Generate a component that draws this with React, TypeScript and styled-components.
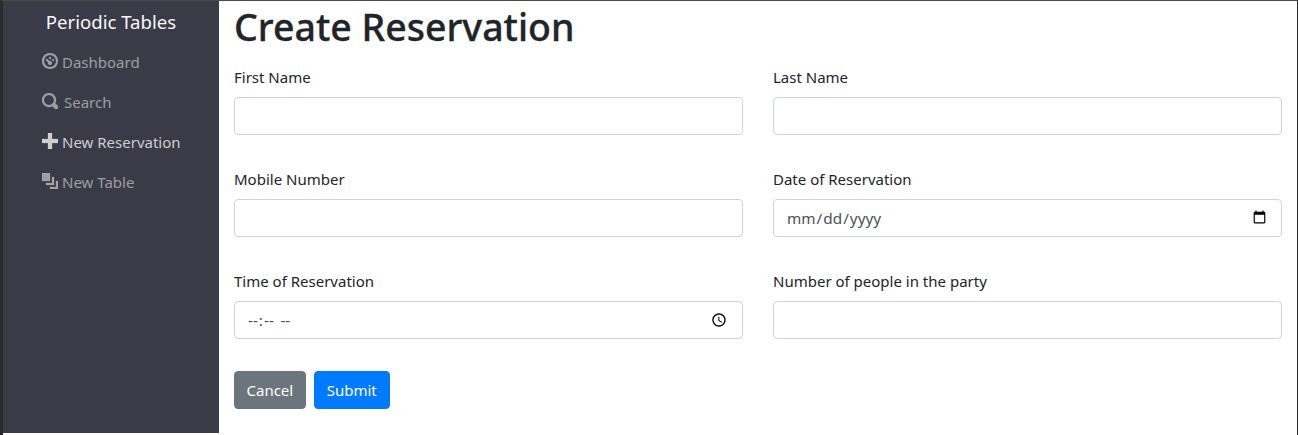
import React from "react";
import styled, { createGlobalStyle } from "styled-components";

const FONT = `"Noto Sans", "Open Sans", "Liberation Sans", sans-serif`;

const Global = createGlobalStyle`
  html, body { margin: 0; padding: 0; background: #fff; }
  * { box-sizing: border-box; }
  body { font-family: ${FONT}; font-size: 16px; line-height: 24px; color: #212529; }
`;

const Frame = styled.div`
  height: 435px;
  display: flex;
  border-top: 1px solid #4a4a4a;
  border-left: 3px solid #2b2b2b;
  border-right: 1px solid #2b2b2b;
  padding-bottom: 2px;
  background: #fff;
  overflow: hidden;
`;

const Sidebar = styled.aside`
  flex: 0 0 216px;
  background: #3a3b46;
  display: flex;
  flex-direction: column;
`;

const Brand = styled.div`
  height: 41px;
  padding-top: 7px;
  text-align: center;
  color: #f8f9fa;
  font-size: 18.6px;
  line-height: 27px;
`;

const Nav = styled.nav`
  display: flex;
  flex-direction: column;
`;

const NavItem = styled.a<{ $active?: boolean }>`
  height: 40px;
  display: flex;
  align-items: center;
  padding-left: 39px;
  font-size: 15px;
  color: ${(p) => (p.$active ? "rgba(255,255,255,0.75)" : "rgba(255,255,255,0.5)")};
  text-decoration: none;
`;

const NavIcon = styled.svg<{ $gap: number }>`
  width: 16px;
  height: 16px;
  fill: currentColor;
  stroke: currentColor;
  stroke-width: 0.12;
  margin-right: ${(p) => p.$gap}px;
  margin-top: -3px;
  flex: none;
`;

const Main = styled.main`
  flex: 1;
  padding: 0 15px;
`;

const Title = styled.h1`
  margin: 2px 0 14px;
  font-size: 37.5px;
  line-height: 48px;
  font-weight: 500;
  -webkit-text-stroke: 0.3px #212529;
  color: #212529;
`;

const FormGrid = styled.form`
  display: grid;
  grid-template-columns: 1fr 1fr;
  column-gap: 30px;
  row-gap: 32px;
`;

const Field = styled.div`
  display: flex;
  flex-direction: column;
`;

const Label = styled.label`
  font-size: 15px;
  line-height: 24px;
  margin-bottom: 8px;
`;

const Input = styled.input`
  height: 38px;
  width: 100%;
  padding: 6px 12px;
  border: 1px solid #ced4da;
  border-radius: 4px;
  font-family: ${FONT};
  font-size: 15.3px;
  color: #495057;
  background: #fff;

  &[type="time"] {
    letter-spacing: 1.2px;
  }
  &[type="time"]::-webkit-datetime-edit-ampm-field {
    margin-left: 2px;
  }
`;

const Actions = styled.div`
  display: flex;
  gap: 8px;
  margin-top: 32px;
`;

const Button = styled.button<{ $primary?: boolean }>`
  height: 38px;
  padding: 0 ${(p) => (p.$primary ? "12px" : "11.5px")};
  border: 1px solid ${(p) => (p.$primary ? "#007bff" : "#6c757d")};
  background: ${(p) => (p.$primary ? "#007bff" : "#6c757d")};
  color: #fff;
  border-radius: 4px;
  font-family: ${FONT};
  font-size: 15px;
`;

const icons = {
  dashboard:
    "M4 0C1.79 0 0 1.79 0 4s1.79 4 4 4 4-1.79 4-4-1.79-4-4-4zm0 1c1.66 0 3 1.34 3 3s-1.34 3-3 3-3-1.34-3-3 1.34-3 3-3zm0 1c-.28 0-.5.22-.5.5s.22.5.5.5.5-.22.5-.5-.22-.5-.5-.5zm-1.66 1a.5.5 0 0 0-.19.84l.91.91c-.02.08-.06.16-.06.25 0 .55.45 1 1 1s1-.45 1-1-.45-1-1-1c-.09 0-.17.04-.25.06l-.91-.91a.5.5 0 0 0-.44-.16.5.5 0 0 0-.06 0zm3.16 0c-.28 0-.5.22-.5.5s.22.5.5.5.5-.22.5-.5-.22-.5-.5-.5z",
  search:
    "M3.5 0C1.57 0 0 1.57 0 3.5S1.57 7 3.5 7c.59 0 1.17-.14 1.66-.41a1 1 0 0 0 .13.13l1 1a1.02 1.02 0 1 0 1.44-1.44l-1-1a1 1 0 0 0-.16-.13c.27-.49.44-1.06.44-1.66C7 1.56 5.43-.01 3.5-.01zm0 1C4.89 1 6 2.11 6 3.5c0 .66-.24 1.27-.66 1.72l-.03.03a1 1 0 0 0-.13.13c-.44.4-1.04.63-1.69.63C2.1 6.01.99 4.9.99 3.51s1.11-2.5 2.5-2.5z",
  plus: "M3 0v3H0v2h3v3h2V5h3V3H5V0H3z",
  layers: "M0 0v4h4V0H0zm5 2v3H2v1h4V2H5zm2 2v3H4v1h4V4H7z",
};

const navItems = [
  { label: "Dashboard", icon: icons.dashboard, gap: 4 },
  { label: "Search", icon: icons.search, gap: 6 },
  { label: "New Reservation", icon: icons.plus, gap: 4, active: true },
  { label: "New Table", icon: icons.layers, gap: 4 },
];

const fields = [
  { label: "First Name", type: "text" },
  { label: "Last Name", type: "text" },
  { label: "Mobile Number", type: "text" },
  { label: "Date of Reservation", type: "date" },
  { label: "Time of Reservation", type: "time" },
  { label: "Number of people in the party", type: "text" },
];

export default function App() {
  return (
    <>
      <Global />
      <Frame>
        <Sidebar>
          <Brand>Periodic Tables</Brand>
          <Nav>
            {navItems.map((n) => (
              <NavItem key={n.label} href="#" $active={n.active}>
                <NavIcon viewBox="0 0 8 8" $gap={n.gap}>
                  <path d={n.icon} />
                </NavIcon>
                {n.label}
              </NavItem>
            ))}
          </Nav>
        </Sidebar>
        <Main>
          <Title>Create Reservation</Title>
          <FormGrid onSubmit={(e) => e.preventDefault()}>
            {fields.map((f) => (
              <Field key={f.label}>
                <Label>{f.label}</Label>
                <Input type={f.type} />
              </Field>
            ))}
          </FormGrid>
          <Actions>
            <Button type="button">Cancel</Button>
            <Button type="submit" $primary>
              Submit
            </Button>
          </Actions>
        </Main>
      </Frame>
    </>
  );
}
